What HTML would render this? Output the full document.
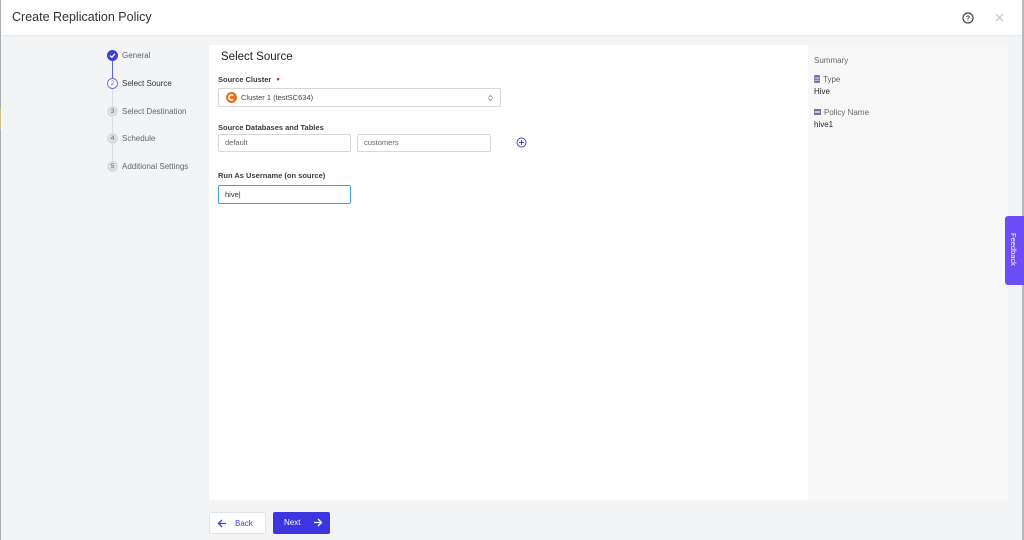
<!DOCTYPE html>
<html><head><meta charset="utf-8"><style>
*{box-sizing:border-box;margin:0;padding:0}
body{width:1024px;height:540px;overflow:hidden;background:#f3f4f6;font-family:"Liberation Sans",sans-serif;position:relative;color:#333}
.hdr{position:absolute;left:0;top:0;width:1024px;height:36px;background:#fff;border-bottom:1px solid #e6e7ea}
.hdr .t{position:absolute;left:12px;top:10px;font-size:12.5px;color:#333}
.lb{position:absolute;left:0;top:0;width:1px;height:540px;background:#a9aeb5}
.rb{position:absolute;right:0;top:0;width:2px;height:540px;background:#b5bac1}
.step{position:absolute;left:107px;font-size:8px;color:#666}
.step .c{position:absolute;left:0;top:0;width:11px;height:11px;border-radius:50%;background:#dcdde0;color:#666;font-size:6.5px;text-align:center;line-height:11px}
.step span.l{position:absolute;left:15px;top:1px;white-space:nowrap}
.main{position:absolute;left:209px;top:45px;width:599px;height:455px;background:#fff}
.sum{position:absolute;left:808px;top:45px;width:200px;height:455px;background:#f8f8f9}
.lbl{position:absolute;font-size:7.5px;font-weight:bold;color:#3a3a3a}
.inp{position:absolute;height:18px;border:1px solid #d5d7db;border-radius:2px;font-size:7.5px;color:#666;padding-left:6px;line-height:16px;background:#fff}
.btn{position:absolute;top:512px;height:22px;border-radius:2px;font-size:8px}
</style></head><body>
<div class="hdr"><div class="t">Create Replication Policy</div>
<svg style="position:absolute;left:962px;top:12px" width="12" height="12" viewBox="0 0 12 12"><circle cx="6" cy="6" r="5" fill="none" stroke="#444" stroke-width="1.2"/><text x="6" y="8.6" font-size="7.5" text-anchor="middle" fill="#444" font-family="Liberation Sans" font-weight="bold">?</text></svg>
<svg style="position:absolute;left:995px;top:13px" width="9" height="9" viewBox="0 0 9 9"><path d="M1 1L8 8M8 1L1 8" stroke="#bbb" stroke-width="1"/></svg>
</div>
<div class="lb"></div><div class="rb"></div>
<div style="position:absolute;left:0;top:108px;width:1px;height:22px;background:#c8c28a"></div>
<div style="position:absolute;left:112px;top:61px;width:1px;height:17px;background:#5b5fe0"></div>
<div style="position:absolute;left:112px;top:89px;width:1px;height:78px;background:#dcdde0"></div>
<div class="step" style="top:50px"><div class="c" style="background:#3d3fd6"><svg width="11" height="11" viewBox="0 0 11 11"><path d="M3 5.6L4.8 7.3L8 3.8" stroke="#fff" stroke-width="1.3" fill="none"/></svg></div><span class="l">General</span></div>
<div class="step" style="top:78px"><div class="c" style="background:#fff;border:1px solid #6b6ff0;color:#5b5fe0;line-height:9px">2</div><span class="l" style="color:#333">Select Source</span></div>
<div class="step" style="top:106px"><div class="c">3</div><span class="l">Select Destination</span></div>
<div class="step" style="top:133px"><div class="c">4</div><span class="l">Schedule</span></div>
<div class="step" style="top:161px"><div class="c">5</div><span class="l">Additional Settings</span></div>
<div class="main"></div>
<div style="position:absolute;left:221px;top:51px;font-size:11.5px;color:#222">Select Source</div>
<div class="lbl" style="left:218px;top:74px">Source Cluster <span style="color:#e0202a;font-size:9px;margin-left:3px">•</span></div>
<div class="inp" style="left:218px;top:88px;width:283px;height:19px;color:#444;padding-left:22px;line-height:17px">Cluster 1 (testSC634)
<svg style="position:absolute;left:7px;top:3px" width="11" height="11" viewBox="0 0 11 11"><circle cx="5.5" cy="5.5" r="5.5" fill="#f26a1b"/><path d="M7.3 3.7A2.6 2.6 0 1 0 7.3 7.3" stroke="#fff" stroke-width="1.6" fill="none"/></svg>
<svg style="position:absolute;right:7px;top:6px" width="5" height="6" viewBox="0 0 5 6"><path d="M0.5 2.5L2.5 0.5L4.5 2.5M0.5 3.5L2.5 5.5L4.5 3.5" fill="none" stroke="#888" stroke-width="0.8"/></svg></div>
<div class="lbl" style="left:218px;top:123px">Source Databases and Tables</div>
<div class="inp" style="left:218px;top:134px;width:133px">default</div>
<div class="inp" style="left:357px;top:134px;width:134px">customers</div>
<svg style="position:absolute;left:516px;top:137px" width="11" height="11" viewBox="0 0 11 11"><circle cx="5.5" cy="5.5" r="4.5" fill="none" stroke="#3d3fd6" stroke-width="1"/><path d="M5.5 3v5M3 5.5h5" stroke="#3d3fd6" stroke-width="1"/></svg>
<div class="lbl" style="left:218px;top:171px">Run As Username (on source)</div>
<div class="inp" style="left:218px;top:185px;width:133px;height:19px;border-color:#3aa7d8;color:#333;line-height:17px">hive|</div>
<div class="sum"></div>
<div style="position:absolute;left:814px;top:56px;font-size:8px;color:#666">Summary</div>
<div style="position:absolute;left:814px;top:75px;font-size:8px;color:#666"><svg width="6" height="8" viewBox="0 0 6 8" style="margin-right:3px;vertical-align:-1px"><rect x="0" y="0" width="6" height="8" rx="1.5" fill="#6d74a8"/><path d="M0.5 3h5M0.5 5.2h5" stroke="#fff" stroke-width="0.7"/></svg>Type</div>
<div style="position:absolute;left:814px;top:87px;font-size:8px;color:#222">Hive</div>
<div style="position:absolute;left:814px;top:108px;font-size:8px;color:#666"><svg width="7" height="6" viewBox="0 0 7 6" style="margin-right:3px;vertical-align:0"><rect width="7" height="6" fill="#6d74a8"/><rect x="1" y="2" width="5" height="2" fill="#c8cbe0"/></svg>Policy Name</div>
<div style="position:absolute;left:814px;top:120px;font-size:8px;color:#222">hive1</div>
<div style="position:absolute;left:1005px;top:216px;width:19px;height:69px;background:#6b4ef5;border-radius:3px 0 0 3px"></div>
<div style="position:absolute;left:1009px;top:233px;font-size:7.5px;color:#fff;writing-mode:vertical-rl">Feedback</div>
<div class="btn" style="left:209px;width:57px;background:#fff;border:1px solid #e2e3e7;color:#3d3fd6"><svg style="position:absolute;left:7px;top:6px" width="10" height="9" viewBox="0 0 10 9"><path d="M9 4.5H1.5M5 1L1.5 4.5L5 8" fill="none" stroke="#3d3fd6" stroke-width="1.3"/></svg><span style="position:absolute;left:25px;top:6px">Back</span></div>
<div class="btn" style="left:273px;width:57px;background:#3d35e0;color:#fff"><span style="position:absolute;left:11px;top:6px">Next</span><svg style="position:absolute;left:40px;top:6px" width="10" height="9" viewBox="0 0 10 9"><path d="M1 4.5H8.5M5 1L8.5 4.5L5 8" fill="none" stroke="#fff" stroke-width="1.3"/></svg></div>
</body></html>
